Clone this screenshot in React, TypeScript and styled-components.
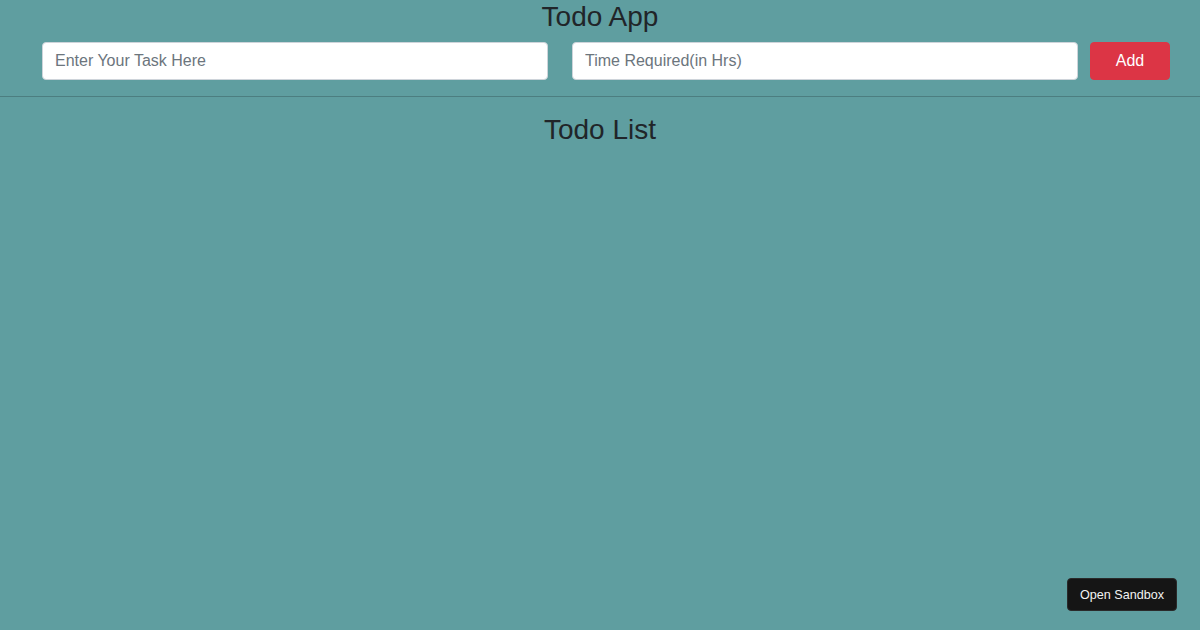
import React, { useState } from "react";
import styled, { createGlobalStyle } from "styled-components";

const GlobalStyle = createGlobalStyle`
  html, body {
    margin: 0;
    padding: 0;
    background-color: cadetblue;
  }
  body {
    font-family: "Liberation Sans", Arial, sans-serif;
    color: #212529;
  }
  * {
    box-sizing: border-box;
  }
`;

const Page = styled.div`
  min-height: 630px;
  background-color: cadetblue;
`;

const Header = styled.header`
  display: flex;
  flex-direction: column;
  border-bottom: 1px solid rgba(0, 0, 0, 0.2);
  padding-top: 3px;
  padding-bottom: 16px;
`;

const Title = styled.h3`
  margin: 0;
  font-size: 28px;
  font-weight: 400;
  line-height: 28px;
  text-align: center;
`;

const FormRow = styled.form`
  display: flex;
  align-items: center;
  margin-top: 11px;
  padding-left: 42px;
`;

const Input = styled.input<{ $gap?: number }>`
  width: 506px;
  height: 38px;
  margin-right: ${(props) => props.$gap ?? 0}px;
  padding: 6px 12px;
  font-family: "Liberation Sans", Arial, sans-serif;
  font-size: 16px;
  color: #495057;
  background: #fff;
  border: 1px solid #ced4da;
  border-radius: 4px;
  outline: none;
  &::placeholder {
    color: #6c757d;
  }
`;

const AddButton = styled.button`
  width: 80px;
  height: 38px;
  font-family: "Liberation Sans", Arial, sans-serif;
  font-size: 16px;
  color: #fff;
  background-color: #dc3545;
  border: 1px solid #dc3545;
  border-radius: 4px;
  cursor: pointer;
`;

const ListSection = styled.section`
  padding-top: 19px;
`;

const SandboxButton = styled.a`
  position: fixed;
  right: 23px;
  bottom: 19px;
  display: flex;
  align-items: center;
  height: 33px;
  padding: 0 12px;
  font-family: "Liberation Sans", Arial, sans-serif;
  font-size: 12.6px;
  color: #f2f2f2;
  background-color: #151515;
  border: 1px solid #2a2a2a;
  border-radius: 4px;
  text-decoration: none;
`;

function App() {
  const [task, setTask] = useState("");
  const [hours, setHours] = useState("");

  return (
    <Page>
      <GlobalStyle />
      <Header>
        <Title>Todo App</Title>
        <FormRow onSubmit={(e) => e.preventDefault()}>
          <Input
            $gap={24}
            placeholder="Enter Your Task Here"
            value={task}
            onChange={(e) => setTask(e.target.value)}
          />
          <Input
            $gap={12}
            placeholder="Time Required(in Hrs)"
            value={hours}
            onChange={(e) => setHours(e.target.value)}
          />
          <AddButton type="submit">Add</AddButton>
        </FormRow>
      </Header>
      <ListSection>
        <Title>Todo List</Title>
      </ListSection>
      <SandboxButton href="#">Open Sandbox</SandboxButton>
    </Page>
  );
}

export default App;
